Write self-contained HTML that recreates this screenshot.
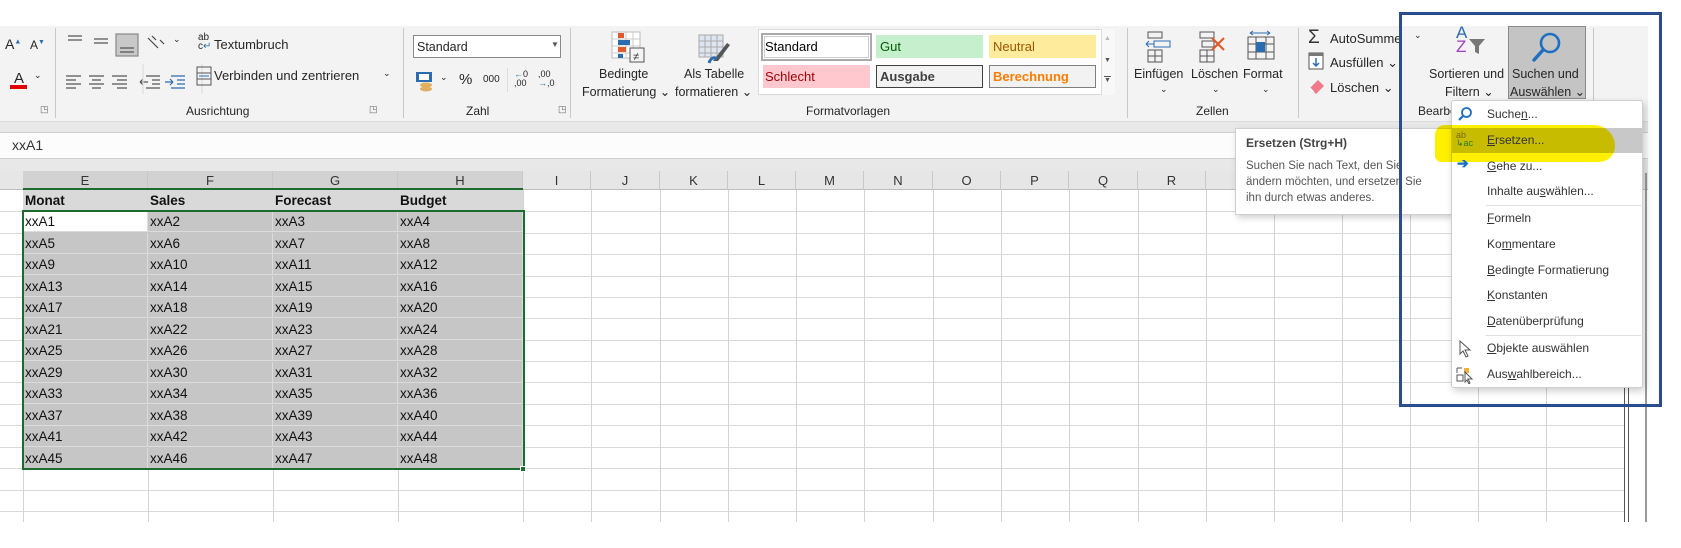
<!DOCTYPE html>
<html><head><meta charset="utf-8"><style>
*{margin:0;padding:0;box-sizing:border-box}
body{width:1681px;height:548px;position:relative;overflow:hidden;background:#fff;font-family:"Liberation Sans",sans-serif;color:#222}
.a{position:absolute}
.t{position:absolute;font-size:12.5px;white-space:nowrap;color:#262626}
.vl{position:absolute;width:1px;background:#d4d4d4}
.hl{position:absolute;height:1px;background:#dadada}
.ch{position:absolute;top:171px;height:19px;font-size:13px;text-align:center;line-height:19px;color:#333;border-right:1px solid #c8c8c8}
.c{position:absolute;height:21px;font-size:13.5px;line-height:22px;padding-left:2px;background:#c6c6c6;color:#111;border-right:1px solid #dcdcdc;border-bottom:1px solid #dcdcdc}
.sep{position:absolute;width:1px;background:#c8c8c8}
.mi{position:absolute;left:1487px;font-size:12px;color:#333}
</style></head><body>
<!-- ribbon -->
<div class="a" style="left:0;top:26px;width:1648px;height:95px;background:#f3f3f3"></div>
<div class="a" style="left:0;top:121px;width:1648px;height:11px;background:#e8e8e8;border-top:1px solid #dcdcdc"></div>
<div class="a" style="left:0;top:132px;width:1648px;height:27px;background:#fcfcfc;border-top:1px solid #d0d0d0;border-bottom:1px solid #d0d0d0"></div>
<div class="t" style="left:12px;top:137px;font-size:14px;color:#333">xxA1</div>
<div class="a" style="left:0;top:159px;width:1648px;height:12px;background:#e8e8e8"></div>
<!-- font section remnants -->
<div class="t" style="left:5px;top:36px;font-size:14px">A<sup style="font-size:7px;color:#2b6cb0">▲</sup></div>
<div class="t" style="left:30px;top:38px;font-size:12px">A<sup style="font-size:7px;color:#2b6cb0">▼</sup></div>
<div class="t" style="left:14px;top:70px;font-size:15px">A</div>
<div class="a" style="left:10px;top:85px;width:17px;height:4px;background:#e00000"></div>
<div class="t" style="left:34px;top:70px;font-size:9px">⌄</div>
<div class="t" style="left:40px;top:104px;font-size:9px;color:#666">◳</div>
<div class="sep" style="left:55px;top:28px;height:90px"></div>
<!-- alignment icons -->
<svg class="a" style="left:60px;top:30px" width="150" height="65" stroke="#555" stroke-width="1.2" fill="none">
<path d="M8 6h14M8 10h14M34 9h14M34 13h14"/>
<rect x="56" y="4" width="22" height="22" fill="#c8c8c8" stroke="#888"/><path d="M60 18h14M60 22h14"/>
<path d="M88 8l10 10M92 6l4 4M100 10l4 4" stroke="#444"/>
<path d="M6 46h15M6 50h10M6 54h15M6 58h10M29 46h15M32 50h9M29 54h15M32 58h9M52 46h15M57 50h10M52 54h15M57 58h10"/>
<path d="M86 46h14M92 50h8M92 54h8M86 58h14M80 52h8M80 52l3-3M80 52l3 3" />
<path d="M111 46h14M117 50h8M117 54h8M111 58h14M105 52h8M113 52l-3-3M113 52l-3 3" stroke="#2b6cb0"/>
<path d="M83 34v30M142 34v30" stroke="#ddd"/>
</svg>
<div class="t" style="left:173px;top:34px;font-size:9px">⌄</div>
<div class="t" style="left:198px;top:33px;font-size:10px;line-height:9px">ab<br>c<span style="color:#2b6cb0">↵</span></div>
<div class="t" style="left:214px;top:37px;font-size:13px">Textumbruch</div>
<svg class="a" style="left:196px;top:66px" width="16" height="20" stroke="#555" fill="none"><rect x="1" y="1" width="14" height="18"/><path d="M1 7h14M1 13h14M3 10h10" /><path d="M3 10h10" stroke="#2b6cb0"/></svg>
<div class="t" style="left:214px;top:68px;font-size:13px">Verbinden und zentrieren</div>
<div class="t" style="left:383px;top:68px;font-size:9px">⌄</div>
<div class="t" style="left:369px;top:104px;font-size:9px;color:#666">◳</div>
<div class="t" style="left:186px;top:104px;font-size:12px">Ausrichtung</div>
<div class="sep" style="left:403px;top:28px;height:90px"></div>
<!-- Zahl -->
<div class="a" style="left:413px;top:35px;width:148px;height:23px;background:#fff;border:1px solid #8a8a8a"></div>
<div class="t" style="left:417px;top:40px;font-size:12.5px">Standard</div>
<div class="t" style="left:551px;top:40px;font-size:8px;color:#555">▼</div>
<svg class="a" style="left:414px;top:70px" width="22" height="22"><rect x="2" y="2" width="16" height="10" fill="#2b6cb0"/><rect x="5" y="4" width="10" height="6" fill="#fff"/><ellipse cx="12" cy="15" rx="6" ry="2.5" fill="#e0b060"/><ellipse cx="12" cy="19" rx="6" ry="2.5" fill="#e0b060"/></svg>
<div class="t" style="left:440px;top:72px;font-size:9px">⌄</div>
<div class="t" style="left:459px;top:71px;font-size:15px">%</div>
<div class="t" style="left:483px;top:74px;font-size:10px">000</div>
<div class="sep" style="left:507px;top:68px;height:24px;background:#ddd"></div>
<div class="t" style="left:514px;top:70px;font-size:9px;line-height:9px"><span style="color:#2b6cb0">←</span>0<br>,00</div>
<div class="t" style="left:538px;top:70px;font-size:9px;line-height:9px">,00<br><span style="color:#2b6cb0">→</span>,0</div>
<div class="t" style="left:466px;top:104px;font-size:12px">Zahl</div>
<div class="t" style="left:558px;top:104px;font-size:9px;color:#666">◳</div>
<div class="sep" style="left:570px;top:28px;height:90px"></div>
<!-- Bedingte / Als Tabelle -->
<svg class="a" style="left:610px;top:30px" width="36" height="34"><g stroke="#bbb" fill="#fff"><rect x="2" y="2" width="28" height="26"/></g><path d="M2 9h28M2 16h28M2 23h28M9 2v26M16 2v26M23 2v26" stroke="#ccc"/><rect x="8" y="3" width="6" height="5" fill="#e05a2a"/><rect x="8" y="10" width="12" height="5" fill="#2b6cb0"/><rect x="8" y="17" width="8" height="5" fill="#e05a2a"/><rect x="8" y="24" width="5" height="4" fill="#2b6cb0"/><rect x="20" y="18" width="14" height="14" fill="#f3f3f3" stroke="#555"/><text x="23" y="30" font-size="11" font-family="Liberation Sans" fill="#333">≠</text></svg>
<div class="t" style="left:599px;top:67px;font-size:12.5px">Bedingte</div>
<div class="t" style="left:582px;top:84px;font-size:12.5px">Formatierung ⌄</div>
<svg class="a" style="left:697px;top:33px" width="36" height="32"><rect x="2" y="2" width="24" height="22" fill="#dde6f0" stroke="#aaa"/><path d="M2 8h24M2 14h24M2 20h24M8 2v22M14 2v22M20 2v22" stroke="#aaa"/><path d="M16 28l14-18 3 2-12 16z" fill="#555"/><path d="M12 30c2-6 6-6 8-4" stroke="#2b6cb0" stroke-width="3" fill="none"/></svg>
<div class="t" style="left:684px;top:67px;font-size:12.5px">Als Tabelle</div>
<div class="t" style="left:675px;top:84px;font-size:12.5px">formatieren ⌄</div>
<!-- style gallery -->
<div class="a" style="left:758px;top:29px;width:357px;height:66px;background:#fff;border:1px solid #dcdcdc"></div>
<div class="a" style="left:761px;top:33px;width:111px;height:28px;background:#fff;border:2px solid #aaa;box-shadow:inset 0 0 0 1px #fff,inset 0 0 0 2px #ccc"></div>
<div class="t" style="left:765px;top:39px;font-size:13px;color:#000">Standard</div>
<div class="a" style="left:876px;top:35px;width:107px;height:23px;background:#c6efce"></div>
<div class="t" style="left:880px;top:39px;font-size:13px;color:#006100">Gut</div>
<div class="a" style="left:989px;top:35px;width:107px;height:23px;background:#ffeb9c"></div>
<div class="t" style="left:993px;top:39px;font-size:13px;color:#9c5700">Neutral</div>
<div class="a" style="left:763px;top:65px;width:107px;height:23px;background:#ffc7ce"></div>
<div class="t" style="left:765px;top:69px;font-size:13px;color:#9c0006">Schlecht</div>
<div class="a" style="left:876px;top:65px;width:107px;height:23px;background:#f2f2f2;border:1px solid #3f3f3f"></div>
<div class="t" style="left:880px;top:69px;font-size:13px;color:#3f3f3f;font-weight:bold">Ausgabe</div>
<div class="a" style="left:989px;top:65px;width:107px;height:23px;background:#f2f2f2;border:1px solid #7f7f7f"></div>
<div class="t" style="left:993px;top:69px;font-size:13px;color:#fa7d00;font-weight:bold">Berechnung</div>
<div class="a" style="left:1101px;top:29px;width:14px;height:66px;border-left:1px solid #dcdcdc;background:#f8f8f8"></div>
<div class="t" style="left:1104px;top:35px;font-size:7px;color:#bbb">▲</div>
<div class="t" style="left:1104px;top:57px;font-size:7px;color:#555">▼</div>
<div class="t" style="left:1104px;top:77px;font-size:7px;color:#555;text-decoration:overline">▼</div>
<div class="t" style="left:806px;top:104px;font-size:12px">Formatvorlagen</div>
<div class="sep" style="left:1127px;top:28px;height:90px"></div>
<!-- Zellen -->
<svg class="a" style="left:1140px;top:30px" width="170" height="34" stroke="#555" fill="none">
<rect x="8" y="2" width="14" height="6"/><rect x="14" y="11" width="16" height="6" stroke="#2b6cb0"/><path d="M6 14h8M6 14l3-3M6 14l3 3" stroke="#2b6cb0"/><rect x="8" y="20" width="14" height="12"/><path d="M8 26h14M15 20v12"/>
<rect x="60" y="2" width="14" height="6"/><rect x="62" y="11" width="12" height="6"/><rect x="60" y="20" width="14" height="12"/><path d="M60 26h14M67 20v12"/><path d="M72 8l12 12M84 8l-12 12" stroke="#e05a2a" stroke-width="2.2"/>
<path d="M110 3h20M110 3l3-2M110 3l3 2M130 3l-3-2M130 3l-3 2" stroke="#2b6cb0"/><rect x="108" y="7" width="26" height="22"/><path d="M108 14h26M108 22h26M116 7v22M126 7v22"/><rect x="116" y="12" width="9" height="10" fill="#2b6cb0" stroke="none"/>
</svg>
<div class="t" style="left:1134px;top:67px;font-size:12.5px">Einfügen</div>
<div class="t" style="left:1191px;top:67px;font-size:12.5px">Löschen</div>
<div class="t" style="left:1243px;top:67px;font-size:12.5px">Format</div>
<div class="t" style="left:1160px;top:84px;font-size:9px">⌄</div>
<div class="t" style="left:1212px;top:84px;font-size:9px">⌄</div>
<div class="t" style="left:1262px;top:84px;font-size:9px">⌄</div>
<div class="t" style="left:1196px;top:104px;font-size:12px">Zellen</div>
<div class="sep" style="left:1298px;top:28px;height:90px"></div>
<!-- Bearbeiten -->
<div class="t" style="left:1308px;top:27px;font-size:19px;color:#333">Σ</div>
<div class="t" style="left:1330px;top:31px;font-size:13px">AutoSumme</div>
<div class="t" style="left:1414px;top:30px;font-size:9px">⌄</div>
<svg class="a" style="left:1308px;top:52px" width="16" height="18"><rect x="1" y="1" width="14" height="16" fill="#fff" stroke="#555"/><rect x="1" y="1" width="14" height="3" fill="#777"/><path d="M8 6v8M5 11l3 3 3-3" stroke="#2b6cb0" stroke-width="1.5" fill="none"/></svg>
<div class="t" style="left:1330px;top:55px;font-size:13px">Ausfüllen ⌄</div>
<svg class="a" style="left:1308px;top:78px" width="18" height="16"><path d="M2 10l8-8 6 6-8 8z" fill="#f07a8a"/><path d="M2 10l4 4" stroke="#fff"/></svg>
<div class="t" style="left:1330px;top:80px;font-size:13px">Löschen ⌄</div>
<div class="t" style="left:1456px;top:26px;font-size:17px;line-height:14px;color:#2b6cb0">A<br><span style="color:#9b3fbf">Z</span></div>
<svg class="a" style="left:1468px;top:38px" width="18" height="18"><path d="M1 1h16l-6 7v8l-4-2v-6z" fill="#777"/></svg>
<div class="t" style="left:1429px;top:67px;font-size:12.5px">Sortieren und</div>
<div class="t" style="left:1445px;top:84px;font-size:12.5px">Filtern ⌄</div>
<div class="a" style="left:1508px;top:26px;width:78px;height:73px;background:#c4c4c4;border:1px solid #8a8a8a"></div>
<svg class="a" style="left:1530px;top:30px" width="34" height="34"><circle cx="20" cy="13" r="9" stroke="#1f6fc0" stroke-width="2.6" fill="none"/><path d="M13 20L4 30" stroke="#1f6fc0" stroke-width="3.4" stroke-linecap="round"/></svg>
<div class="t" style="left:1512px;top:67px;font-size:12.5px">Suchen und</div>
<div class="t" style="left:1510px;top:84px;font-size:12.5px">Auswählen ⌄</div>
<div class="t" style="left:1418px;top:104px;font-size:12px">Bearbeiten</div>
<div class="sep" style="left:1593px;top:28px;height:90px"></div>
<!-- column headers -->
<div class="a" style="left:0;top:171px;width:1648px;height:19px;background:#e6e6e6;border-bottom:1px solid #bdbdbd"></div>
<div class="ch" style="left:23px;width:125px;background:#d2d2d2">E</div>
<div class="ch" style="left:148px;width:125px;background:#d2d2d2">F</div>
<div class="ch" style="left:273px;width:125px;background:#d2d2d2">G</div>
<div class="ch" style="left:398px;width:125px;background:#d2d2d2">H</div>
<div class="ch" style="left:523px;width:68px">I</div><div class="ch" style="left:591px;width:69px">J</div><div class="ch" style="left:660px;width:68px">K</div><div class="ch" style="left:728px;width:68px">L</div><div class="ch" style="left:796px;width:68px">M</div><div class="ch" style="left:864px;width:69px">N</div><div class="ch" style="left:933px;width:68px">O</div><div class="ch" style="left:1001px;width:68px">P</div><div class="ch" style="left:1069px;width:69px">Q</div><div class="ch" style="left:1138px;width:68px">R</div><div class="ch" style="left:1206px;width:68px"></div><div class="ch" style="left:1274px;width:68px"></div><div class="ch" style="left:1342px;width:68px"></div><div class="ch" style="left:1410px;width:68px"></div><div class="ch" style="left:1478px;width:68px"></div><div class="ch" style="left:1546px;width:78px"></div>
<div class="a" style="left:23px;top:188px;width:500px;height:2px;background:#1e6b30"></div>
<!-- grid lines -->
<div class="hl" style="left:0;top:211px;width:1624px"></div><div class="hl" style="left:0;top:233px;width:1624px"></div><div class="hl" style="left:0;top:254px;width:1624px"></div><div class="hl" style="left:0;top:276px;width:1624px"></div><div class="hl" style="left:0;top:297px;width:1624px"></div><div class="hl" style="left:0;top:318px;width:1624px"></div><div class="hl" style="left:0;top:340px;width:1624px"></div><div class="hl" style="left:0;top:361px;width:1624px"></div><div class="hl" style="left:0;top:382px;width:1624px"></div><div class="hl" style="left:0;top:404px;width:1624px"></div><div class="hl" style="left:0;top:425px;width:1624px"></div><div class="hl" style="left:0;top:447px;width:1624px"></div><div class="hl" style="left:0;top:468px;width:1624px"></div><div class="hl" style="left:0;top:490px;width:1624px"></div><div class="hl" style="left:0;top:511px;width:1624px"></div>
<div class="vl" style="left:23px;top:190px;height:332px"></div><div class="vl" style="left:148px;top:190px;height:332px"></div><div class="vl" style="left:273px;top:190px;height:332px"></div><div class="vl" style="left:398px;top:190px;height:332px"></div><div class="vl" style="left:523px;top:190px;height:332px"></div><div class="vl" style="left:591px;top:190px;height:332px"></div><div class="vl" style="left:660px;top:190px;height:332px"></div><div class="vl" style="left:728px;top:190px;height:332px"></div><div class="vl" style="left:796px;top:190px;height:332px"></div><div class="vl" style="left:864px;top:190px;height:332px"></div><div class="vl" style="left:933px;top:190px;height:332px"></div><div class="vl" style="left:1001px;top:190px;height:332px"></div><div class="vl" style="left:1069px;top:190px;height:332px"></div><div class="vl" style="left:1138px;top:190px;height:332px"></div><div class="vl" style="left:1206px;top:190px;height:332px"></div><div class="vl" style="left:1274px;top:190px;height:332px"></div><div class="vl" style="left:1342px;top:190px;height:332px"></div><div class="vl" style="left:1410px;top:190px;height:332px"></div><div class="vl" style="left:1478px;top:190px;height:332px"></div><div class="vl" style="left:1546px;top:190px;height:332px"></div>
<div class="a" style="left:1624px;top:173px;width:5px;height:349px;border-left:1px solid #555;border-right:1px solid #555"></div>
<div class="a" style="left:1645px;top:173px;width:2px;height:349px;background:#999"></div>
<!-- data -->
<div class="a" style="left:23px;top:190px;width:500px;height:21px;background:#d9d9d9"></div>
<div class="t" style="left:25px;top:193px;font-size:13.5px;font-weight:bold;color:#111">Monat</div>
<div class="t" style="left:150px;top:193px;font-size:13.5px;font-weight:bold;color:#111">Sales</div>
<div class="t" style="left:275px;top:193px;font-size:13.5px;font-weight:bold;color:#111">Forecast</div>
<div class="t" style="left:400px;top:193px;font-size:13.5px;font-weight:bold;color:#111">Budget</div>
<div class="a" style="left:23px;top:211px;width:500px;height:258px;background:#c6c6c6"></div>
<div id="d"></div>
<div class="a" style="left:22px;top:210px;width:503px;height:260px;border:2px solid #1e6b30"></div>
<div class="a" style="left:520px;top:466px;width:6px;height:6px;background:#1e6b30;border:1px solid #fff"></div>
<!-- tooltip -->
<div class="a" style="left:1235px;top:128px;width:217px;height:87px;background:#fff;border:1px solid #d0d0d0;box-shadow:2px 3px 6px rgba(0,0,0,.18)"></div>
<div class="t" style="left:1246px;top:136px;font-size:12px;font-weight:bold;color:#444">Ersetzen (Strg+H)</div>
<div class="t" style="left:1246px;top:158px;font-size:11.5px;color:#555;line-height:16px">Suchen Sie nach Text, den Sie<br>ändern möchten, und ersetzen Sie<br>ihn durch etwas anderes.</div>
<!-- menu -->
<div class="a" style="left:1451px;top:100px;width:192px;height:288px;background:#fff;border:1px solid #cfcfcf;border-radius:3px;box-shadow:2px 3px 8px rgba(0,0,0,.2)"></div>
<div class="a" style="left:1452px;top:128px;width:190px;height:25px;background:#c8c8c8"></div>
<div class="a" style="left:1435px;top:125px;width:180px;height:37px;background:#fff000;border-radius:18px 40px 30px 12px;mix-blend-mode:multiply"></div>
<svg class="a" style="left:1457px;top:106px" width="16" height="16"><circle cx="9.5" cy="6.5" r="4.5" stroke="#1f6fc0" stroke-width="1.8" fill="none"/><path d="M6 10l-4 4" stroke="#1f6fc0" stroke-width="2.2"/></svg>
<div class="mi" style="top:107px">Suche<u>n</u>...</div>
<div class="t" style="left:1456px;top:131px;font-size:9px;line-height:8px;color:#7a6a00">ab<br><span style="color:#2a7a2a">↳ac</span></div>
<div class="mi" style="top:133px"><u>E</u>rsetzen...</div>
<div class="t" style="left:1457px;top:155px;font-size:14px;color:#1f6fc0;font-weight:bold">➔</div>
<div class="mi" style="top:159px"><u>G</u>ehe zu...</div>
<div class="mi" style="top:184px">Inhalte au<u>s</u>wählen...</div>
<div class="a" style="left:1486px;top:205px;width:155px;height:1px;background:#e0e0e0"></div>
<div class="mi" style="top:211px"><u>F</u>ormeln</div>
<div class="mi" style="top:237px">Ko<u>m</u>mentare</div>
<div class="mi" style="top:263px"><u>B</u>edingte Formatierung</div>
<div class="mi" style="top:288px"><u>K</u>onstanten</div>
<div class="mi" style="top:314px"><u>D</u>atenüberprüfung</div>
<div class="a" style="left:1486px;top:335px;width:155px;height:1px;background:#e0e0e0"></div>
<svg class="a" style="left:1458px;top:340px" width="14" height="18"><path d="M2 1v13l3-3 3 6 2-1-3-6h5z" fill="#fff" stroke="#555"/></svg>
<div class="mi" style="top:341px"><u>O</u>bjekte auswählen</div>
<svg class="a" style="left:1456px;top:366px" width="18" height="18" fill="none" stroke="#555"><path d="M1 2h5M1 2v5M1 9h6v6H1z"/><rect x="8" y="2" width="5" height="5" fill="#f0b040" stroke="none"/><path d="M9 6v10l2-2 2 4 1-1-2-4h4z" fill="#fff"/></svg>
<div class="mi" style="top:367px">Aus<u>w</u>ahlbereich...</div>
<!-- blue box -->
<div class="a" style="left:1399px;top:12px;width:263px;height:395px;border:3px solid #2c4d8c"></div>
<script>
var h='',xs=[23,148,273,398],n=1;
for(var r=0;r<12;r++){for(var c=0;c<4;c++){var y=211+r*21.5;h+='<div class="c" style="left:'+xs[c]+'px;top:'+Math.round(y)+'px;width:125px;'+(n==1?'background:#fff;':'')+'">xxA'+n+'</div>';n++;}}
document.getElementById('d').innerHTML=h;
</script>
</body></html>
